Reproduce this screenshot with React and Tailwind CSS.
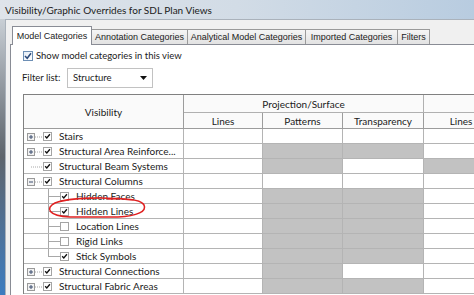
import React from 'react';

const rows = [
  { label: 'Stairs', level: 0, exp: '+', checked: true, grey: [0, 0, 0, 0] },
  { label: 'Structural Area Reinforce...', level: 0, exp: '+', checked: true, grey: [0, 1, 1, 0] },
  { label: 'Structural Beam Systems', level: 0, exp: null, checked: true, grey: [0, 1, 0, 1] },
  { label: 'Structural Columns', level: 0, exp: '-', checked: true, grey: [0, 0, 0, 0] },
  { label: 'Hidden Faces', level: 1, checked: true, grey: [0, 1, 1, 0] },
  { label: 'Hidden Lines', level: 1, checked: true, grey: [0, 1, 1, 0] },
  { label: 'Location Lines', level: 1, checked: false, grey: [0, 1, 1, 0] },
  { label: 'Rigid Links', level: 1, checked: false, grey: [0, 1, 1, 0] },
  { label: 'Stick Symbols', level: 1, checked: true, last: true, grey: [0, 1, 1, 0] },
  { label: 'Structural Connections', level: 0, exp: '+', checked: true, grey: [0, 1, 0, 0] },
  { label: 'Structural Fabric Areas', level: 0, exp: '+', checked: true, grey: [0, 1, 1, 0] },
];

const tabs = [
  { label: 'Annotation Categories', w: 'w-[97px]' },
  { label: 'Analytical Model Categories', w: 'w-[119px]' },
  { label: 'Imported Categories', w: 'w-[93px]' },
  { label: 'Filters', w: 'w-[33px]' },
];

function Check({ checked }) {
  return (
    <span className="w-[9px] h-[9px] border border-[#a4a4a4] bg-white flex items-center justify-center shrink-0">
      {checked && (
        <svg width="9" height="9" viewBox="0 0 9 9">
          <path d="M1.5 4.2 L3.6 6.4 L7.6 1.6" fill="none" stroke="#111" strokeWidth="1.7" />
        </svg>
      )}
    </span>
  );
}

function TreeTop({ exp }) {
  return (
    <svg width="19" height="15" viewBox="0 0 19 15" className="shrink-0">
      {exp ? (
        <>
          <rect x="3.5" y="4.5" width="7" height="7" fill="#f2f2f2" stroke="#9a9a9a" />
          <line x1="5" y1="8" x2="9" y2="8" stroke="#3c4f70" />
          {exp === '+' && <line x1="7" y1="6" x2="7" y2="10" stroke="#3c4f70" />}
          <line x1="11" y1="8" x2="19" y2="8" stroke="#a8a8a8" strokeDasharray="1 1" />
        </>
      ) : (
        <line x1="7" y1="8" x2="19" y2="8" stroke="#a8a8a8" strokeDasharray="1 1" />
      )}
    </svg>
  );
}

function TreeChild({ last }) {
  return (
    <svg width="36" height="15" viewBox="0 0 36 15" className="shrink-0">
      <line x1="24.5" y1="0" x2="24.5" y2={last ? 8 : 15} stroke="#a8a8a8" />
      <line x1="24.5" y1="7.5" x2="36" y2="7.5" stroke="#a8a8a8" />
    </svg>
  );
}

export default function App() {
  return (
    <div className="w-[474px] h-[295px] overflow-hidden relative flex flex-col bg-[#f0f0f0] font-['Lato',sans-serif] text-[#1b1b1b] whitespace-nowrap">
      {/* title bar */}
      <div className="h-[19px] shrink-0 flex items-center pl-[5px] bg-gradient-to-r from-[#dfe4ea] via-[#d2dce6] to-[#b8cce0] text-[10px] leading-none">
        <span>Visibility/Graphic Overrides for SDL Plan Views</span>
      </div>

      <div className="flex-1 flex min-h-0">
        {/* window frame */}
        <div className="w-[5px] shrink-0 bg-gradient-to-b from-[#c9cfd5] via-[#5d646c] to-[#3b7cc0]" />

        <div className="flex-1 flex flex-col border-l border-t border-[#aab2bb] pl-[4px] pt-[6px] min-w-0">
          {/* tabs */}
          <div className="h-[18px] flex items-end pl-[2px] font-['Liberation_Sans',sans-serif] text-[9px] leading-none">
            <div className="w-[80px] h-[19px] -mb-px bg-white border border-b-0 border-[#898c95] flex items-center justify-center z-10">
              Model Categories
            </div>
            {tabs.map((t) => (
              <div
                key={t.label}
                className={`${t.w} h-[15px] -ml-px bg-gradient-to-b from-[#f5f5f5] to-[#e2e2e2] border border-b-0 border-[#9a9a9a] flex items-center justify-center`}
              >
                {t.label}
              </div>
            ))}
          </div>

          {/* tab panel */}
          <div className="flex-1 bg-white border-l border-t border-[#898c95] pl-[12px] min-h-0">
            <div className="h-[10px] mt-[6px] flex items-center gap-[3px] text-[9.5px]">
              <span className="w-[10px] h-[10px] border border-[#6d8fb5] bg-gradient-to-br from-[#e6eef7] to-[#fdfdfe] flex items-center justify-center">
                <svg width="8" height="8" viewBox="0 0 8 8">
                  <path d="M1 4 L3.2 6.3 L7 1.2" fill="none" stroke="#2b4a7a" strokeWidth="1.5" />
                </svg>
              </span>
              <span>Show model categories in this view</span>
            </div>

            <div className="h-[20px] mt-[7px] -ml-px flex items-center text-[9.5px]">
              <span className="w-[45px]">Filter list:</span>
              <div className="w-[86px] h-[20px] border border-[#c2c2c2] bg-white flex items-center pl-[5px] pr-[5px] justify-between">
                <span>Structure</span>
                <svg width="7" height="4" viewBox="0 0 7 4">
                  <path d="M0 0 L7 0 L3.5 4 Z" fill="#111" />
                </svg>
              </div>
            </div>

            {/* table */}
            <div className="mt-[6px] w-max border-l border-t border-[#808080] text-[10px] leading-none">
              <div className="grid grid-cols-[160px_79px_80px_81px_74px] grid-rows-[18px_16px] bg-[#fafafa]">
                <div className="row-span-2 border-r border-b border-[#9c9c9c] flex items-center justify-center">Visibility</div>
                <div className="col-span-3 border-r border-b border-[#b0b0b0] flex items-center justify-center">Projection/Surface</div>
                <div className="border-b border-[#b0b0b0]" />
                <div className="border-r border-b border-[#9c9c9c] flex items-center justify-center">Lines</div>
                <div className="border-r border-b border-[#9c9c9c] flex items-center justify-center">Patterns</div>
                <div className="border-r border-b border-[#9c9c9c] flex items-center justify-center">Transparency</div>
                <div className="border-b border-[#9c9c9c] flex items-center justify-center">Lines</div>
              </div>
              {rows.map((r) => (
                <div key={r.label} className="grid grid-cols-[160px_79px_80px_81px_74px] h-[15px]">
                  <div className="border-r border-b border-[#b4b4b4] flex items-center overflow-hidden">
                    {r.level === 0 ? <TreeTop exp={r.exp} /> : <TreeChild last={r.last} />}
                    <Check checked={r.checked} />
                    <span className="ml-[7px]">{r.label}</span>
                  </div>
                  {r.grey.map((g, i) => (
                    <div
                      key={i}
                      className={`border-b border-[#b4b4b4] ${i < 3 ? 'border-r' : ''} ${g ? 'bg-[#c2c2c2] border-[#a8a8a8]' : 'bg-white'}`}
                    />
                  ))}
                </div>
              ))}
            </div>
          </div>
        </div>
      </div>

      {/* red hand-drawn circle */}
      <svg className="absolute left-0 top-0 pointer-events-none" width="474" height="295" viewBox="0 0 474 295">
        <path
          d="M133 200 C110 197 70 197 55 203 C45 208 48 216 70 217 L118 217 C138 216 147 211 144 205 C141 200 128 198 108 199"
          fill="none"
          stroke="#e02020"
          strokeWidth="1.6"
          strokeLinecap="round"
        />
      </svg>
    </div>
  );
}
